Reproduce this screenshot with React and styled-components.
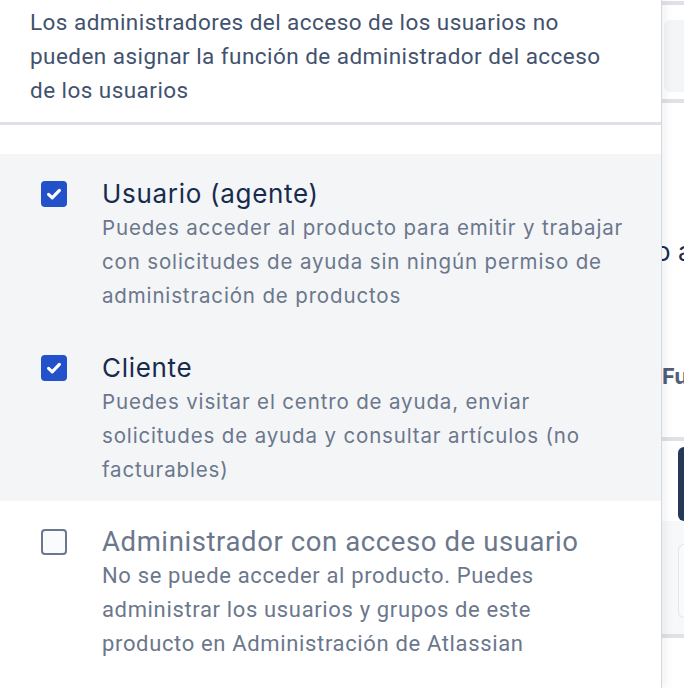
import React from 'react';
import styled, { createGlobalStyle } from 'styled-components';

const GlobalStyle = createGlobalStyle`
  html, body {
    margin: 0;
    padding: 0;
    background: #ffffff;
  }
  #root {
    height: 688px;
  }
`;

const roles = [
  {
    id: 'agent',
    title: 'Usuario (agente)',
    description:
      'Puedes acceder al producto para emitir y trabajar con solicitudes de ayuda sin ningún permiso de administración de productos',
    checked: true,
  },
  {
    id: 'customer',
    title: 'Cliente',
    description:
      'Puedes visitar el centro de ayuda, enviar solicitudes de ayuda y consultar artículos (no facturables)',
    checked: true,
  },
];

const Page = styled.div`
  display: flex;
  height: 688px;
  overflow: hidden;
`;

const Panel = styled.div`
  position: relative;
  z-index: 1;
  width: 661px;
  flex-shrink: 0;
  background: #ffffff;
  border-right: 1px solid #d5d8de;
  box-shadow: 2px 0 10px rgba(9, 30, 66, 0.08);
  display: flex;
  flex-direction: column;
`;

const Note = styled.p`
  margin: 0;
  padding: 5px 40px 15px 30px;
  font-family: Roboto, 'Liberation Sans', sans-serif;
  font-size: 22.5px;
  letter-spacing: 0.45px;
  line-height: 34px;
  color: #42526e;
`;

const Divider = styled.div`
  height: 3px;
  background: #dfe1e6;
  margin-bottom: 29px;
`;

const Group = styled.div`
  display: flex;
  flex-direction: column;
  gap: ${({ $gap }) => $gap}px;
  padding: ${({ $pad }) => $pad};
  background: ${({ $shaded }) => ($shaded ? '#f4f5f7' : '#ffffff')};
`;

const Option = styled.label`
  display: grid;
  grid-template-columns: 26px 545px;
  column-gap: 35px;
  padding-left: 41px;
  font-family: ${({ $muted }) =>
    $muted ? "Roboto, 'Liberation Sans', sans-serif" : "Inter, 'Liberation Sans', sans-serif"};
`;

const Box = styled.span`
  box-sizing: border-box;
  width: 26px;
  height: 26px;
  margin-top: 4px;
  border-radius: 4px;
  display: flex;
  align-items: center;
  justify-content: center;
  background: ${({ $checked }) => ($checked ? '#2351c9' : '#fafbfc')};
  border: ${({ $checked }) => ($checked ? 'none' : '2px solid #6b778c')};
`;

const Texts = styled.span`
  display: flex;
  flex-direction: column;
`;

const Title = styled.span`
  font-size: ${({ $muted }) => ($muted ? '27.5px' : '26px')};
  letter-spacing: ${({ $muted }) => ($muted ? '0.6px' : '0.7px')};
  line-height: 34px;
  white-space: nowrap;
  color: ${({ $muted }) => ($muted ? '#6b778c' : '#172b4d')};
`;

const Description = styled.span`
  max-width: ${({ $muted }) => ($muted ? '480px' : '545px')};
  font-size: ${({ $muted }) => ($muted ? '22px' : '20.5px')};
  letter-spacing: ${({ $muted }) => ($muted ? '0.65px' : '0.85px')};
  line-height: 34px;
  color: #6b778c;
`;

const Backdrop = styled.div`
  flex: 1;
  min-width: 0;
  overflow: hidden;
  background: #ffffff;
  display: flex;
  flex-direction: column;
  font-family: Inter, 'Liberation Sans', sans-serif;
`;

const Rule = styled.div`
  height: 4px;
  flex-shrink: 0;
  background: #dfe1e6;
  margin: ${({ $m }) => $m};
`;

const Field = styled.div`
  height: 72px;
  flex-shrink: 0;
  margin: 15px 0 7px 2px;
  border-radius: 6px 0 0 6px;
  background: #f4f5f7;
`;

const Heading = styled.div`
  margin: 132px 0 0 -7px;
  font-size: 26px;
  line-height: 34px;
  color: #172b4d;
  white-space: nowrap;
`;

const Label = styled.div`
  margin-top: 92px;
  font-size: 22px;
  font-weight: 700;
  line-height: 30px;
  color: #505f79;
  white-space: nowrap;
`;

const DarkButton = styled.div`
  height: 74px;
  flex-shrink: 0;
  margin: 6px 0 0 16px;
  border-radius: 8px 0 0 8px;
  background: #253858;
`;

const Tray = styled.div`
  flex-shrink: 0;
  padding: 23px 0 16px 16px;
  background: #f7f8f9;
`;

const Input = styled.div`
  height: 72px;
  border: 1px solid #e4e6ea;
  border-right: none;
  border-radius: 8px 0 0 8px;
  background: #f9fafb;
`;

function Check() {
  return (
    <svg width="18" height="18" viewBox="0 0 18 18" fill="none">
      <path
        d="M3.6 9.4 L7.2 12.8 L14.4 5.4"
        stroke="#ffffff"
        strokeWidth="3.2"
        strokeLinecap="round"
        strokeLinejoin="round"
      />
    </svg>
  );
}

function RoleOption({ title, description, checked, muted }) {
  return (
    <Option $muted={muted}>
      <Box $checked={checked}>{checked && <Check />}</Box>
      <Texts>
        <Title $muted={muted}>{title}</Title>
        <Description $muted={muted}>{description}</Description>
      </Texts>
    </Option>
  );
}

export default function App() {
  return (
    <>
      <GlobalStyle />
      <Page>
        <Panel>
          <Note>
            Los administradores del acceso de los usuarios no pueden asignar la función de
            administrador del acceso de los usuarios
          </Note>
          <Divider />
          <Group $shaded $gap={38} $pad="23px 0 14px">
            {roles.map((role) => (
              <RoleOption key={role.id} {...role} />
            ))}
          </Group>
          <Group $gap={0} $pad="24px 0 0">
            <RoleOption
              muted
              title="Administrador con acceso de usuario"
              description="No se puede acceder al producto. Puedes administrar los usuarios y grupos de este producto en Administración de Atlassian"
              checked={false}
            />
          </Group>
        </Panel>
        <Backdrop>
          <Rule $m="1px 0 0" />
          <Field />
          <Rule $m="0" />
          <Heading>o acceso</Heading>
          <Label>Función</Label>
          <Rule $m="46px 0 0" />
          <DarkButton />
          <Tray>
            <Input />
          </Tray>
          <Rule $m="0" />
        </Backdrop>
      </Page>
    </>
  );
}
